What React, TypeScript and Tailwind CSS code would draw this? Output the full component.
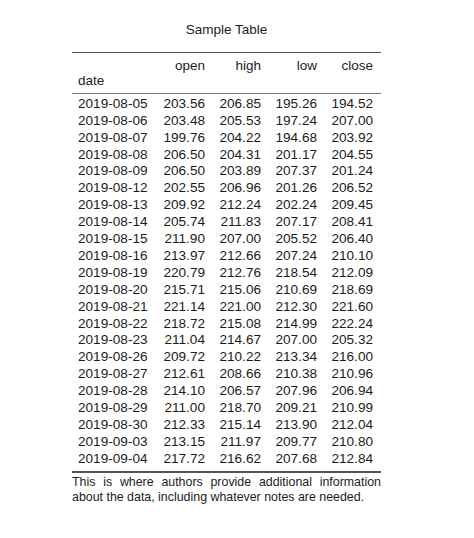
const ROWS: [string, string, string, string, string][] = [
  ["2019-08-05", "203.56", "206.85", "195.26", "194.52"],
  ["2019-08-06", "203.48", "205.53", "197.24", "207.00"],
  ["2019-08-07", "199.76", "204.22", "194.68", "203.92"],
  ["2019-08-08", "206.50", "204.31", "201.17", "204.55"],
  ["2019-08-09", "206.50", "203.89", "207.37", "201.24"],
  ["2019-08-12", "202.55", "206.96", "201.26", "206.52"],
  ["2019-08-13", "209.92", "212.24", "202.24", "209.45"],
  ["2019-08-14", "205.74", "211.83", "207.17", "208.41"],
  ["2019-08-15", "211.90", "207.00", "205.52", "206.40"],
  ["2019-08-16", "213.97", "212.66", "207.24", "210.10"],
  ["2019-08-19", "220.79", "212.76", "218.54", "212.09"],
  ["2019-08-20", "215.71", "215.06", "210.69", "218.69"],
  ["2019-08-21", "221.14", "221.00", "212.30", "221.60"],
  ["2019-08-22", "218.72", "215.08", "214.99", "222.24"],
  ["2019-08-23", "211.04", "214.67", "207.00", "205.32"],
  ["2019-08-26", "209.72", "210.22", "213.34", "216.00"],
  ["2019-08-27", "212.61", "208.66", "210.38", "210.96"],
  ["2019-08-28", "214.10", "206.57", "207.96", "206.94"],
  ["2019-08-29", "211.00", "218.70", "209.21", "210.99"],
  ["2019-08-30", "212.33", "215.14", "213.90", "212.04"],
  ["2019-09-03", "213.15", "211.97", "209.77", "210.80"],
  ["2019-09-04", "217.72", "216.62", "207.68", "212.84"],
];

const COLS = "grid grid-cols-[71px_56px_56px_56px_56px] pl-[6px] pr-[8px]";

export default function App() {
  return (
    <div className="w-[474px] h-[538px] bg-white text-[#1c1c1c] font-['Liberation_Sans',Arial,sans-serif] pt-[21px]">
      <div className="ml-[72px] w-[309px]">
        {/* Title */}
        <div className="text-center text-[13.5px] leading-[18px]">Sample Table</div>

        <div className="mt-[13px] h-[1.3px] bg-[#555]" />

        {/* Header */}
        <div className={`${COLS} text-[13.5px] leading-[15px] pt-[5px] pb-[5px]`}>
          <div />
          <div className="text-right">open</div>
          <div className="text-right">high</div>
          <div className="text-right">low</div>
          <div className="text-right">close</div>
          <div>date</div>
          <div />
          <div />
          <div />
          <div />
        </div>

        <div className="h-px bg-[#777]" />

        {/* Body */}
        <div className="pt-[1.5px] pb-[3.5px]">
          {ROWS.map((r) => (
            <div key={r[0]} className={`${COLS} text-[13.6px] leading-[16.9px]`}>
              <div>{r[0]}</div>
              <div className="text-right">{r[1]}</div>
              <div className="text-right">{r[2]}</div>
              <div className="text-right">{r[3]}</div>
              <div className="text-right">{r[4]}</div>
            </div>
          ))}
        </div>

        <div className="h-[1.3px] bg-[#555]" />

        {/* Note */}
        <p className="mt-[2px] text-[12.4px] leading-[15px] text-justify">
          This is where authors provide additional information about the data, including whatever notes are needed.
        </p>
      </div>
    </div>
  );
}
